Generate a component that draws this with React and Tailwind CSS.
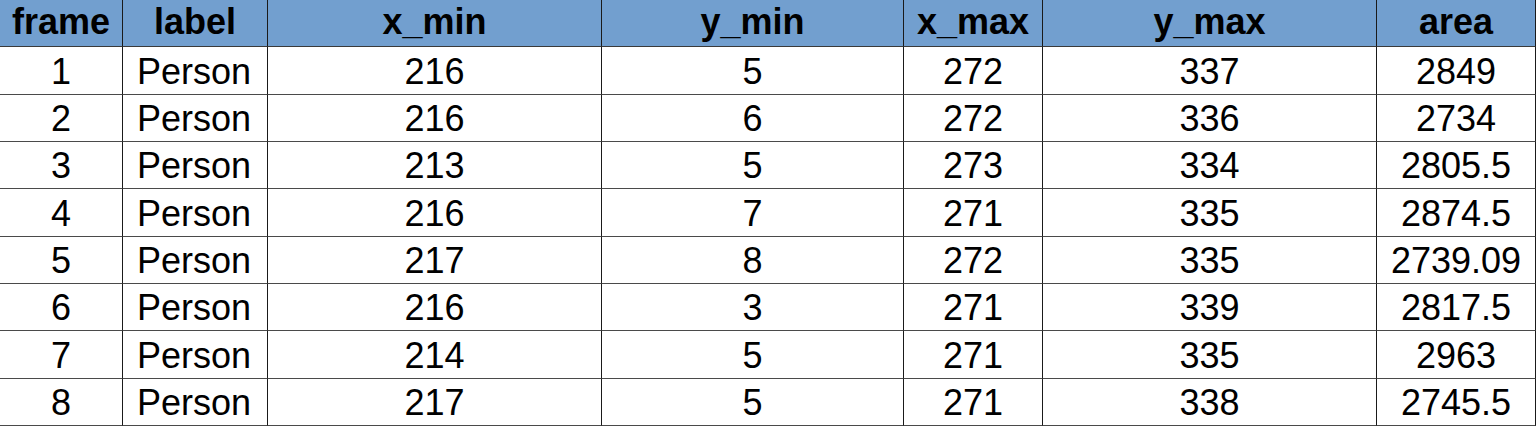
import React from 'react';

const headers = ['frame', 'label', 'x_min', 'y_min', 'x_max', 'y_max', 'area'];

const rows = [
    [1, 'Person', 216, 5, 272, 337, '2849'],
    [2, 'Person', 216, 6, 272, 336, '2734'],
    [3, 'Person', 213, 5, 273, 334, '2805.5'],
    [4, 'Person', 216, 7, 271, 335, '2874.5'],
    [5, 'Person', 217, 8, 272, 335, '2739.09'],
    [6, 'Person', 216, 3, 271, 339, '2817.5'],
    [7, 'Person', 214, 5, 271, 335, '2963'],
    [8, 'Person', 217, 5, 271, 338, '2745.5'],
];

const App = () => {
    return (
        <div className="w-[1536px] h-[427px] bg-white overflow-hidden" style={{ fontFamily: '"Liberation Sans", Arial, sans-serif' }}>
            <div className="grid grid-cols-[123px_145px_334px_302px_139px_334px_159px] grid-rows-[47px_48px_47px_47px_48px_47px_47px_48px_47px] text-[36px] leading-none text-black">
                {headers.map((h) => (
                    <div key={h} className="bg-[#729fcf] font-bold flex items-center justify-center border-r border-b border-r-[#1a1a1a] border-b-[#3a3a3a] pb-[2px]">
                        {h}
                    </div>
                ))}
                {rows.map((row, ri) =>
                    row.map((cell, ci) => (
                        <div
                            key={`${ri}-${ci}`}
                            className={`flex items-center border-r border-b border-r-[#1a1a1a] border-b-[#4a4a4a] pt-[2px] ${
                                ci === 1 ? 'justify-start pl-[14px]' : 'justify-center'
                            }`}
                        >
                            {cell}
                        </div>
                    ))
                )}
            </div>
        </div>
    );
};

export default App;
